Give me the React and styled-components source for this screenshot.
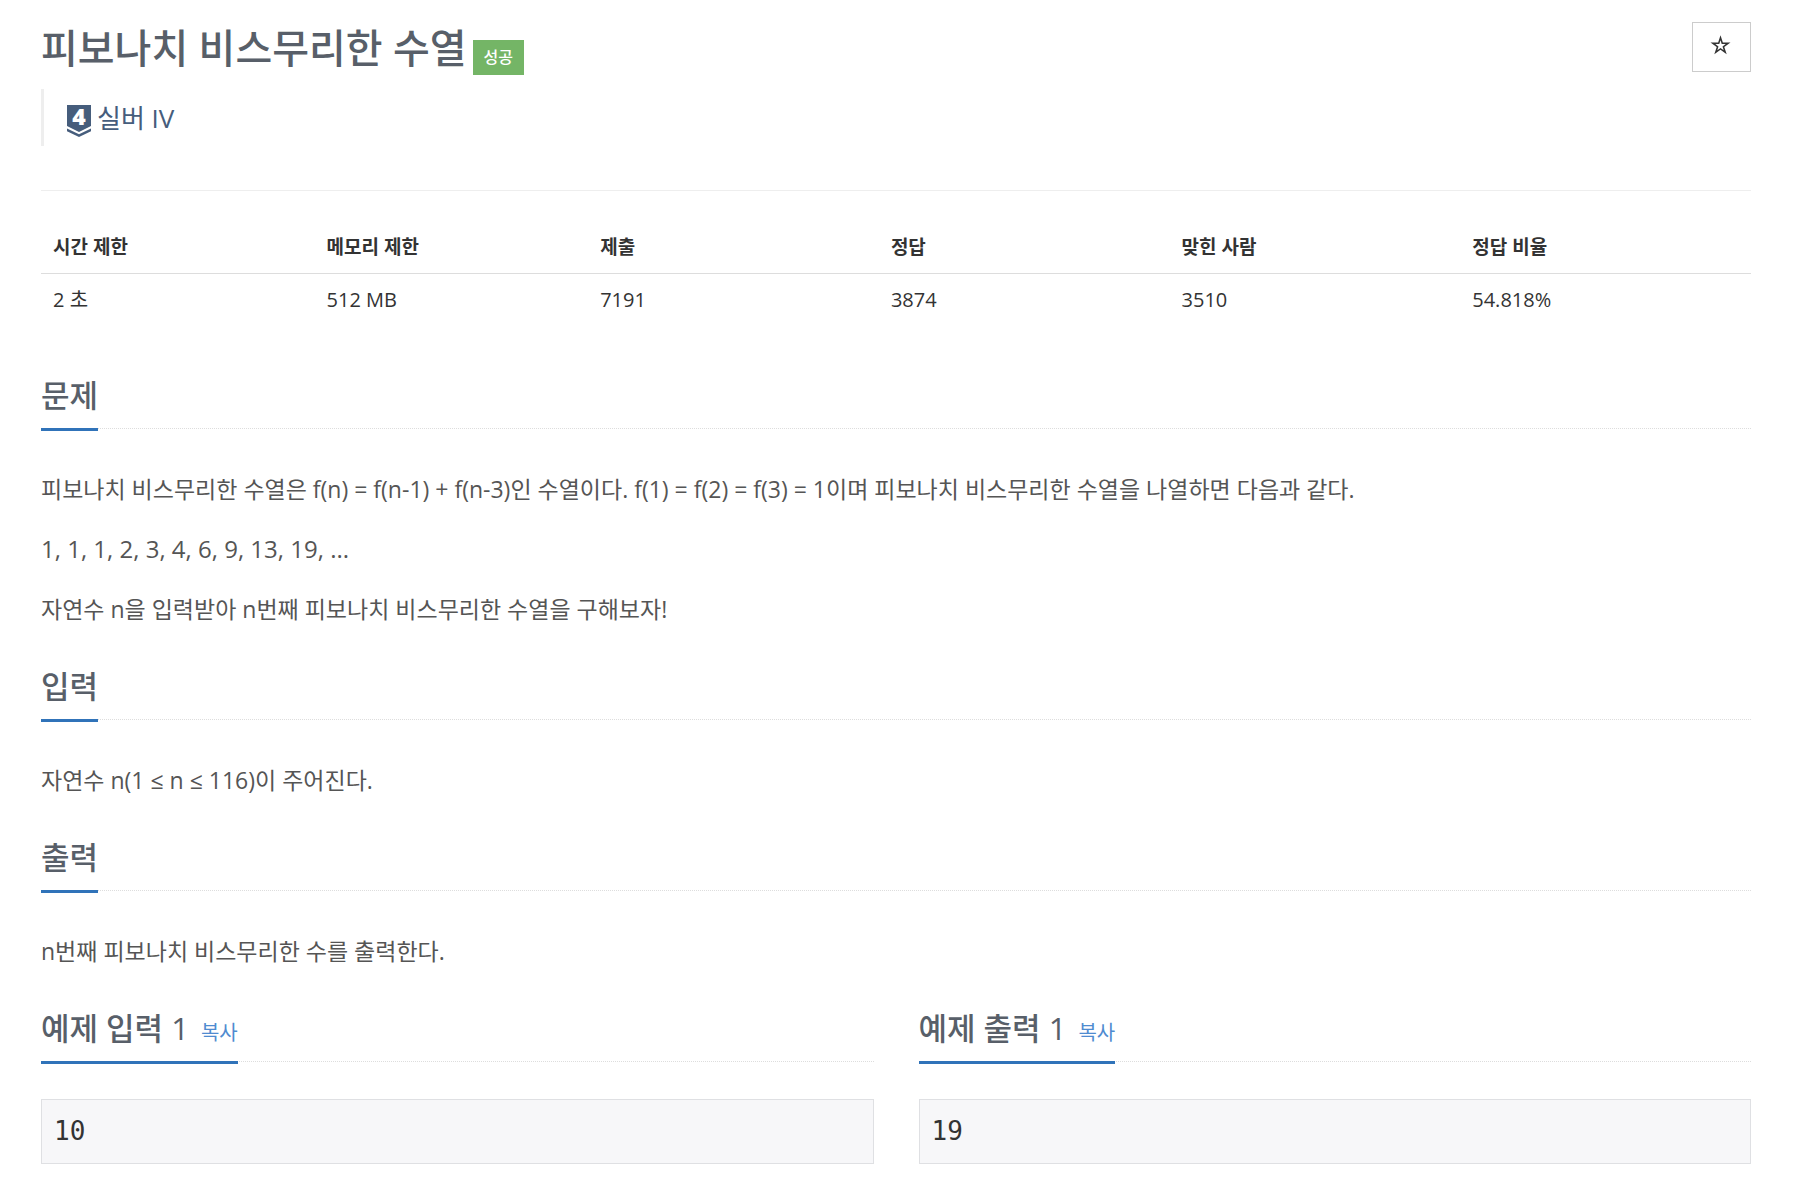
import styled, { createGlobalStyle } from "styled-components";

const GlobalStyle = createGlobalStyle`
    * {
        box-sizing: border-box;
    }
    body {
        margin: 0;
        background: #fff;
        color: #333;
        font-family: 'Open Sans', 'Noto Sans CJK KR', sans-serif;
    }
`

const Page = styled.main`
    padding: 22px 57px 40px 41px;
`

const TitleBar = styled.header`
    display: flex;
    justify-content: space-between;
    align-items: flex-start;
`

const TitleGroup = styled.div`
    display: flex;
    align-items: flex-end;
    gap: 6px;
    height: 53px;
`

const Title = styled.h1`
    margin: 0;
    font-size: 40px;
    font-weight: 500;
    line-height: 54px;
    color: #585f69;
`

const Badge = styled.span`
    padding: 0 11px;
    font-size: 16px;
    font-weight: 500;
    line-height: 35px;
    color: #fff;
    background: #74b566;
`

const StarButton = styled.button`
    display: flex;
    align-items: center;
    justify-content: center;
    width: 59px;
    height: 50px;
    padding: 0 2px 4px 0;
    border: 1px solid #ccc;
    background: #fff;
    color: #333;
    cursor: pointer;
`

const Tier = styled.blockquote`
    display: flex;
    align-items: center;
    gap: 6px;
    height: 57px;
    margin: 14px 0 44px;
    padding: 0 23px;
    border-left: 3px solid #eee;
    font-size: 26px;
    line-height: 36px;
    color: #465d7c;

    svg {
        margin-top: 6px;
        overflow: visible;
    }
`

const Divider = styled.hr`
    margin: 0;
    border: 0;
    border-top: 1px solid #eee;
`

const InfoTable = styled.table`
    width: 100%;
    margin-top: 30px;
    border-collapse: collapse;
    table-layout: fixed;
    text-align: left;

    th, td {
        padding: 12px;
        line-height: 28px;
    }
    th {
        font-size: 19px;
        font-weight: 700;
        border-bottom: 1px solid #ddd;
    }
    td {
        font-size: 20px;
    }
`

const Section = styled.section`
    margin-top: ${props => props.$first ? "43px" : "28px"};
`

const Headline = styled.div`
    display: flex;
    height: 60px;
    margin-bottom: 37px;
    border-bottom: 1px dotted #ddd;
`

const Heading = styled.h2`
    display: flex;
    align-items: baseline;
    gap: 12px;
    height: 62px;
    margin: 0;
    padding-top: 4px;
    border-bottom: 3px solid #3073b9;
    font-size: 31px;
    font-weight: 500;
    line-height: 44px;
    color: #585f69;
    white-space: nowrap;
`

const CopyButton = styled.button`
    padding: 0;
    border: 0;
    background: none;
    font-family: inherit;
    font-size: 20px;
    line-height: 28px;
    color: #4f8bd0;
    cursor: pointer;
`

const Text = styled.p`
    margin: 0 0 14px;
    font-size: ${props => props.$numeric ? "24px" : "23px"};
    line-height: 46px;
    color: #555;

    &:last-child {
        margin-bottom: 0;
    }
`

const Samples = styled.div`
    display: grid;
    grid-template-columns: 1fr 1fr;
    gap: 45px;
`

const SampleData = styled.pre`
    margin: 0;
    padding: 12px;
    border: 1px solid #dfe0e3;
    background: #f7f7f9;
    font-family: 'DejaVu Sans Mono', monospace;
    font-size: 26px;
    line-height: 39px;
`

const columns = [
    { name: "시간 제한", value: "2 초", width: "16%" },
    { name: "메모리 제한", value: "512 MB", width: "16%" },
    { name: "제출", value: "7191", width: "17%" },
    { name: "정답", value: "3874", width: "17%" },
    { name: "맞힌 사람", value: "3510", width: "17%" },
    { name: "정답 비율", value: "54.818%", width: "17%" },
]

function TierIcon() {
    return (
        <svg width="24" height="32" viewBox="0 0 24 32" aria-hidden="true">
            <path d="M0 0H24V21L12 27L0 21Z" fill="#465d7c" />
            <path d="M0 23.5L12 29.3L24 23.5V26.2L12 32L0 26.2Z" fill="#465d7c" />
            <text x="12" y="20" textAnchor="middle" fontSize="23" fontWeight="800" fill="#fff">4</text>
        </svg>
    )
}

function StarIcon() {
    return (
        <svg width="21" height="20" viewBox="0 0 21 20" aria-hidden="true">
            <path
                d="M10.5 .3L12.85 7.56L20.5 7.6L14.3 12L16.7 19.3L10.5 14.8L4.3 19.3L6.7 12L.5 7.6L8.15 7.56Z
                   M10.5 5.2L9.3 9.1H5.3L8.5 11.4L7.3 15.3L10.5 12.9L13.7 15.3L12.5 11.4L15.7 9.1H11.7Z"
                fill="currentColor"
                fillRule="evenodd"
            />
        </svg>
    )
}

function ProblemSection({ title, first, copy, children }) {
    return (
        <Section $first={first}>
            <Headline>
                <Heading>
                    {title}
                    {copy && <CopyButton type="button">복사</CopyButton>}
                </Heading>
            </Headline>
            {children}
        </Section>
    )
}

export default function App() {
    return (
        <Page>
            <GlobalStyle />
            <TitleBar>
                <TitleGroup>
                    <Title>피보나치 비스무리한 수열</Title>
                    <Badge>성공</Badge>
                </TitleGroup>
                <StarButton type="button" aria-label="즐겨찾기">
                    <StarIcon />
                </StarButton>
            </TitleBar>
            <Tier>
                <TierIcon />
                <span>실버 IV</span>
            </Tier>
            <Divider />
            <InfoTable>
                <colgroup>
                    {columns.map(col => <col key={col.name} width={col.width} />)}
                </colgroup>
                <thead>
                    <tr>
                        {columns.map(col => <th key={col.name} scope="col">{col.name}</th>)}
                    </tr>
                </thead>
                <tbody>
                    <tr>
                        {columns.map(col => <td key={col.name}>{col.value}</td>)}
                    </tr>
                </tbody>
            </InfoTable>

            <ProblemSection title="문제" first>
                <Text>피보나치 비스무리한 수열은 f(n) = f(n-1) + f(n-3)인 수열이다. f(1) = f(2) = f(3) = 1이며 피보나치 비스무리한 수열을 나열하면 다음과 같다.</Text>
                <Text $numeric>1, 1, 1, 2, 3, 4, 6, 9, 13, 19, ...</Text>
                <Text>자연수 n을 입력받아 n번째 피보나치 비스무리한 수열을 구해보자!</Text>
            </ProblemSection>
            <ProblemSection title="입력">
                <Text>자연수 n(1 ≤ n ≤ 116)이 주어진다.</Text>
            </ProblemSection>
            <ProblemSection title="출력">
                <Text>n번째 피보나치 비스무리한 수를 출력한다.</Text>
            </ProblemSection>
            <Samples>
                <ProblemSection title="예제 입력 1" copy>
                    <SampleData>10</SampleData>
                </ProblemSection>
                <ProblemSection title="예제 출력 1" copy>
                    <SampleData>19</SampleData>
                </ProblemSection>
            </Samples>
        </Page>
    )
}
